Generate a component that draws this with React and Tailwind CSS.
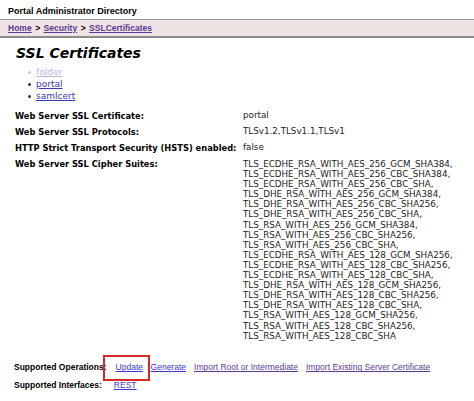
const ciphers = [
  "TLS_ECDHE_RSA_WITH_AES_256_GCM_SHA384,",
  "TLS_ECDHE_RSA_WITH_AES_256_CBC_SHA384,",
  "TLS_ECDHE_RSA_WITH_AES_256_CBC_SHA,",
  "TLS_DHE_RSA_WITH_AES_256_GCM_SHA384,",
  "TLS_DHE_RSA_WITH_AES_256_CBC_SHA256,",
  "TLS_DHE_RSA_WITH_AES_256_CBC_SHA,",
  "TLS_RSA_WITH_AES_256_GCM_SHA384,",
  "TLS_RSA_WITH_AES_256_CBC_SHA256,",
  "TLS_RSA_WITH_AES_256_CBC_SHA,",
  "TLS_ECDHE_RSA_WITH_AES_128_GCM_SHA256,",
  "TLS_ECDHE_RSA_WITH_AES_128_CBC_SHA256,",
  "TLS_ECDHE_RSA_WITH_AES_128_CBC_SHA,",
  "TLS_DHE_RSA_WITH_AES_128_GCM_SHA256,",
  "TLS_DHE_RSA_WITH_AES_128_CBC_SHA256,",
  "TLS_DHE_RSA_WITH_AES_128_CBC_SHA,",
  "TLS_RSA_WITH_AES_128_GCM_SHA256,",
  "TLS_RSA_WITH_AES_128_CBC_SHA256,",
  "TLS_RSA_WITH_AES_128_CBC_SHA",
];

const rows = [
  ["Web Server SSL Certificate:", "portal"],
  ["Web Server SSL Protocols:", "TLSv1.2,TLSv1.1,TLSv1"],
  ["HTTP Strict Transport Security (HSTS) enabled:", "false"],
];

const link = "underline text-[#3a3ab8]";
const visited = "underline text-[#5b3a96]";

export default function App() {
  return (
    <div className="w-[474px] h-[401px] bg-white overflow-hidden font-['DejaVu_Sans',sans-serif] text-black whitespace-nowrap">
      {/* header */}
      <div className="pt-[6px] pl-[8px] h-[20px] border-b border-[#9a9a9a] font-['Liberation_Sans',sans-serif] text-[9px] font-bold leading-[11px]">
        Portal Administrator Directory
      </div>
      <div className="h-[18px] bg-[#efe3e3] border-b-2 border-[#8c8c8c] pl-[8px] flex items-center gap-[3.5px] font-['Liberation_Sans',sans-serif] text-[8.5px] font-bold">
        <a className={visited}>Home</a>
        <span>&gt;</span>
        <a className={visited}>Security</a>
        <span>&gt;</span>
        <a className={visited}>SSLCertificates</a>
      </div>

      <div className="pl-[16px] pt-[6px]">
        <h1 className="italic font-bold text-[14px] leading-[18px]">SSL Certificates</h1>
        <ul className="mt-[4px] pl-[12px] text-[9px] leading-[12px]">
          <li className="flex items-center gap-[5px]">
            <span className="w-[3px] h-[3px] rounded-full bg-[#c8c8d8]" />
            <a className="underline text-[#b5b5e6]">folder</a>
          </li>
          <li className="flex items-center gap-[5px]">
            <span className="w-[3px] h-[3px] rounded-full bg-[#333]" />
            <a className={link}>portal</a>
          </li>
          <li className="flex items-center gap-[5px]">
            <span className="w-[3px] h-[3px] rounded-full bg-[#333]" />
            <a className={link}>samlcert</a>
          </li>
        </ul>
      </div>

      <div className="pl-[15px] mt-[6px]">
        {rows.map(([k, v]) => (
          <div key={k} className="flex h-[16px] items-center">
            <div className="w-[228px] font-bold text-[8.3px]">{k}</div>
            <div className="text-[#222] text-[8.75px]">{v}</div>
          </div>
        ))}
        <div className="flex pt-[3px]">
          <div className="w-[228px] font-bold text-[8.3px] leading-[10px]">Web Server SSL Cipher Suites:</div>
          <div className="leading-[10.1px] text-[8.75px] text-[#222]">
            {ciphers.map((c) => (
              <div key={c}>{c}</div>
            ))}
          </div>
        </div>
      </div>

      <div className="pl-[14px] mt-[14px] font-['Liberation_Sans',sans-serif] text-[8.5px]">
        <div className="flex items-center h-[26px]">
          <span className="font-bold">Supported Operations:</span>
          <span className="relative -ml-[4px] h-[26px] w-[47px] pl-[13px] flex items-center">
            <a className="underline text-[#3a3ad0]">Update</a>
            <span className="absolute inset-0 border-2 border-[#d42a2a]" />
          </span>
          <a className="ml-[1px] underline text-[#3a3ad0]">Generate</a>
          <a className="ml-[8px] underline text-[#5b3a96]">Import Root or Intermediate</a>
          <a className="ml-[8px] underline text-[#5b3a96]">Import Existing Server Certificate</a>
        </div>
        <div className="flex items-center h-[14px] mt-[-2px]">
          <span className="font-bold">Supported Interfaces:</span>
          <a className="ml-[12px] underline text-[#3a3ad0]">REST</a>
        </div>
      </div>
    </div>
  );
}
